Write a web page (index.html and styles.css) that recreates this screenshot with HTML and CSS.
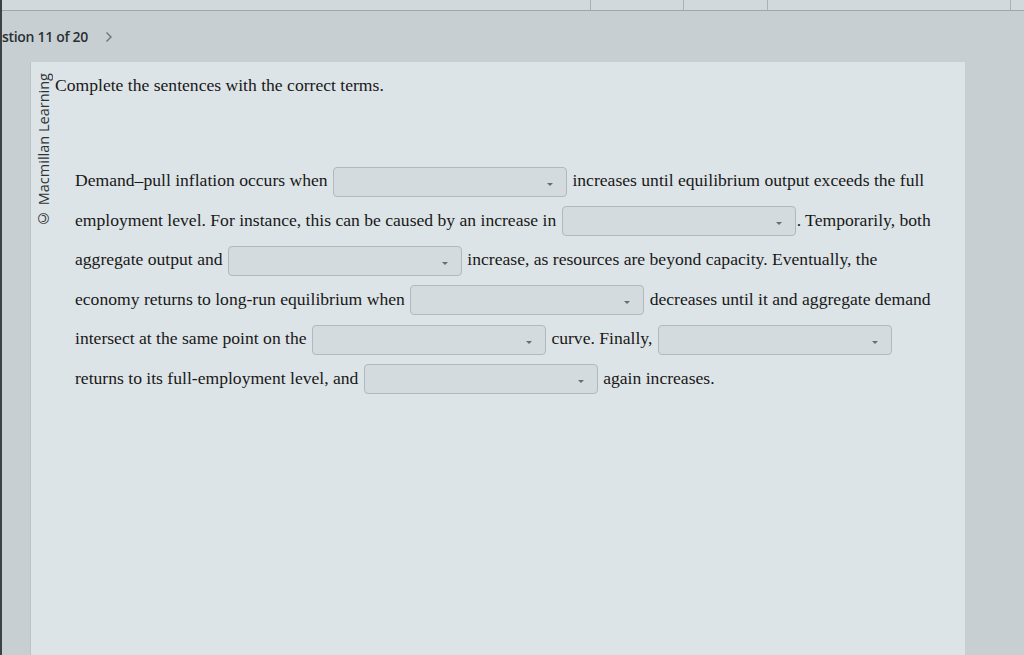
FILE: index.html
```html
<!DOCTYPE html>
<html>
<head>
<meta charset="utf-8">
<link rel="stylesheet" href="styles.css">
</head>
<body>
<div class="topstrip">
  <span class="tab t1"></span><span class="tab t2"></span><span class="tab t3"></span><span class="tab t4"></span>
</div>
<div class="header">
  <span class="qnum">stion 11 of 20</span>
  <svg class="chev" width="8" height="12" viewBox="0 0 8 12"><path d="M1.5 1.5 L6 6 L1.5 10.5" fill="none" stroke="#6b7478" stroke-width="1.4"/></svg>
</div>
<div class="card">
  <div class="copyright">© Macmillan Learning</div>
  <div class="content">
    <div class="title">Complete the sentences with the correct terms.</div>
    <p class="para"><span class="seg">Demand–pull inflation occurs when</span> <span class="dd"><span class="caret"></span></span> <span class="seg">increases until equilibrium output exceeds the full</span> <span class="seg">employment level. For instance, this can be caused by an increase in</span> <span class="dd"><span class="caret"></span></span><span class="seg">. Temporarily, both</span> <span class="seg">aggregate output and</span> <span class="dd"><span class="caret"></span></span> <span class="seg">increase, as resources are beyond capacity. Eventually, the</span> <span class="seg">economy returns to long-run equilibrium when</span> <span class="dd"><span class="caret"></span></span> <span class="seg">decreases until it and aggregate demand</span> <span class="seg">intersect at the same point on the</span> <span class="dd"><span class="caret"></span></span> <span class="seg">curve. Finally,</span> <span class="dd"><span class="caret"></span></span> <span class="seg">returns to its full-employment level, and</span> <span class="dd"><span class="caret"></span></span> <span class="seg">again increases.</span></p>
  </div>
</div>
</body>
</html>
```

FILE: styles.css
```css
html, body {
  margin: 0;
  padding: 0;
  height: 100%;
  overflow: hidden;
}
body {
  background: #c7cfd3;
  font-family: "Liberation Serif", "Times New Roman", serif;
  color: #181818;
  border-left: 2px solid #3a4246;
  box-sizing: border-box;
  display: flex;
  flex-direction: column;
}
.topstrip {
  height: 10px;
  background: #d2d9dc;
  border-bottom: 1px solid #9ea7ab;
  position: relative;
  flex: none;
}
.tab {
  position: absolute;
  top: 0;
  width: 1px;
  height: 10px;
  background: #a9b1b5;
}
.t1 { left: 588px; }
.t2 { left: 681px; }
.t3 { left: 765px; }
.t4 { left: 1008px; }
.header {
  height: 51px;
  display: flex;
  align-items: center;
  gap: 17px;
  flex: none;
}
.qnum {
  font-family: "Open Sans", "Noto Sans", sans-serif;
  font-size: 14px;
  font-weight: 600;
  color: #2a2f33;
  letter-spacing: -0.3px;
}
.chev { margin-top: 1px; }
.card {
  margin-left: 28px;
  width: 935px;
  flex: 1;
  background: #dde4e7;
  border-left: 1px solid #bcc4c8;
  display: flex;
  padding-top: 12px;
  box-sizing: border-box;
}
.copyright {
  writing-mode: vertical-rl;
  transform: rotate(180deg);
  white-space: nowrap;
  font-family: "Open Sans", "Noto Sans", sans-serif;
  font-size: 14.5px;
  color: #2e3337;
  width: 18px;
  height: 152px;
  margin-left: 4px;
  margin-top: 2px;
  text-align: right;
  line-height: 18px;
  flex: none;
}
.content {
  margin-left: 2px;
}
.title {
  font-size: 17.6px;
  line-height: 22px;
}
.para {
  margin: 65px 0 0 20px;
  width: 870px;
  font-size: 17.6px;
  line-height: 39.5px;
}
.seg { white-space: nowrap; }
.dd {
  display: inline-block;
  position: relative;
  width: 232px;
  height: 28px;
  border: 1px solid #b2b9bd;
  border-radius: 4px;
  background: #d4dbde;
  vertical-align: middle;
  margin: 0 1px;
}
.caret {
  position: absolute;
  right: 13px;
  top: 15px;
  width: 0;
  height: 0;
  border-left: 3px solid transparent;
  border-right: 3px solid transparent;
  border-top: 3px solid #666d71;
}
```
